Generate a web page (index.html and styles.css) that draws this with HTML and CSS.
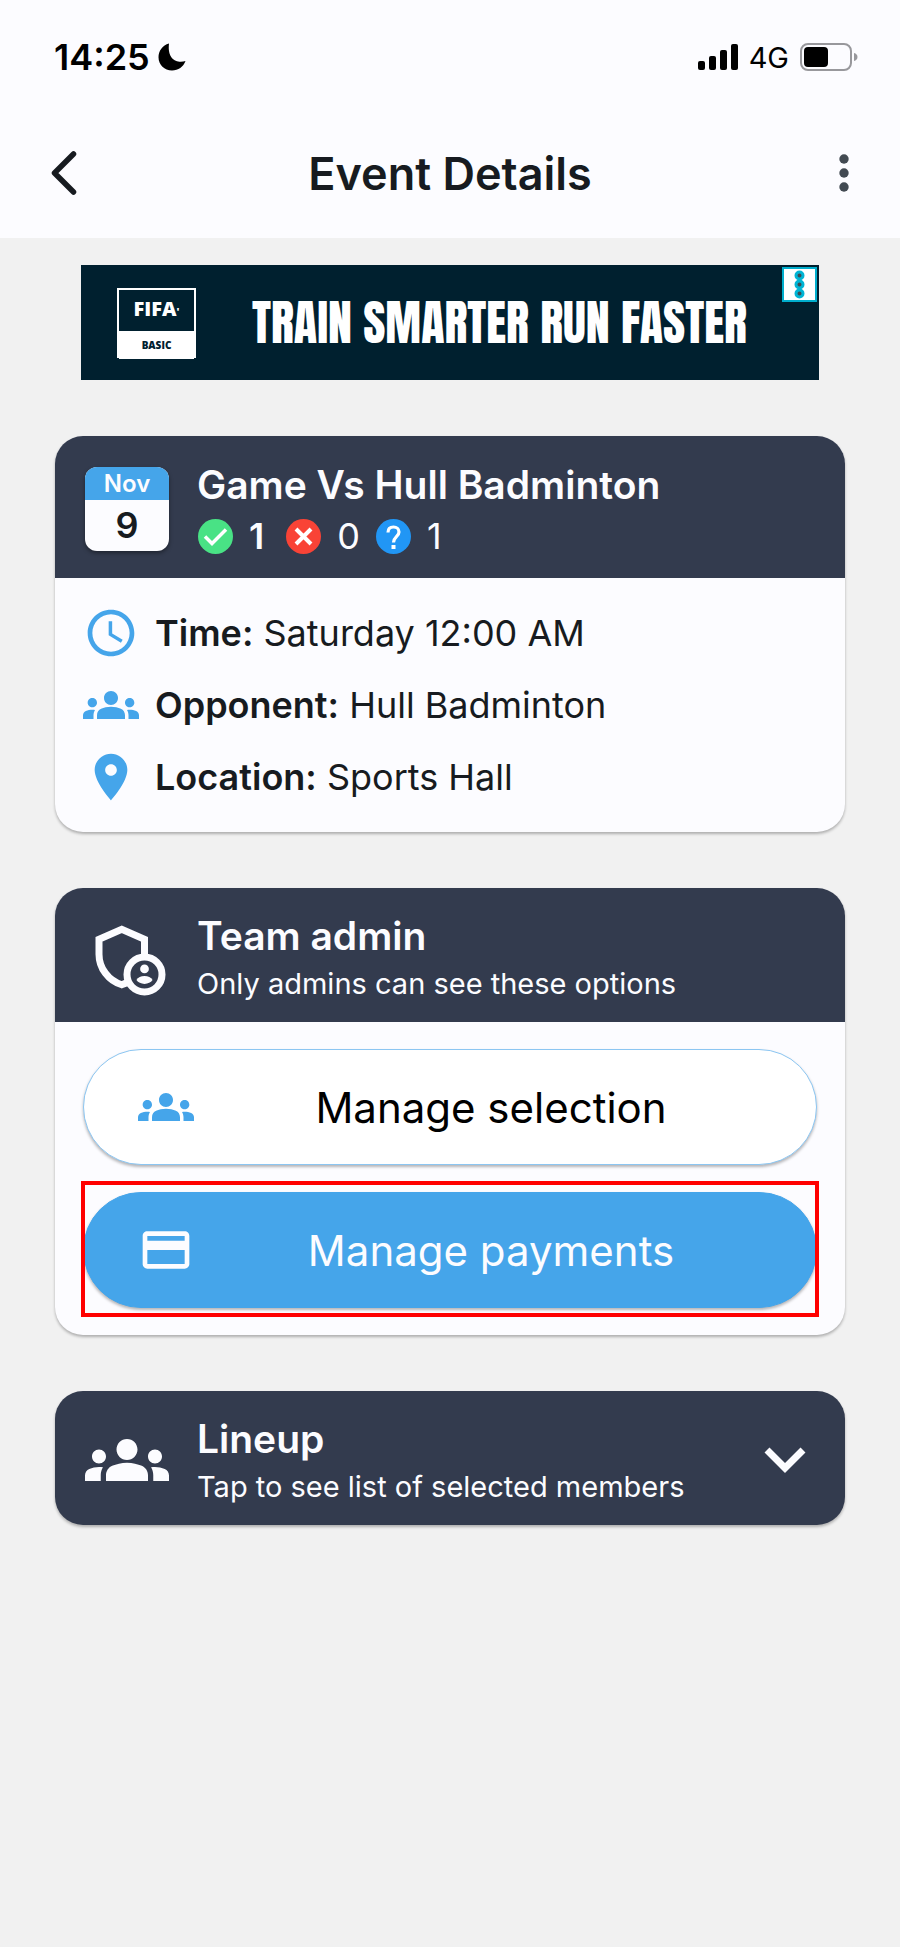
FILE: index.html
```html
<!DOCTYPE html>
<html lang="en">
<head>
    <meta charset="UTF-8">
    <meta name="viewport" content="width=device-width, initial-scale=1.0">
    <title>Event Details</title>
    <link rel="stylesheet" href="styles.css">
</head>
<body>
    <!-- shared icons -->
    <svg class="sprite" aria-hidden="true">
        <symbol id="icon-groups" viewBox="0 0 24 24">
            <path d="M12 12.75c1.63 0 3.07.39 4.24.9 1.08.48 1.76 1.56 1.76 2.73V18H6v-1.61c0-1.18.68-2.26 1.76-2.73 1.17-.52 2.61-.91 4.24-.91zM4 13c1.1 0 2-.9 2-2s-.9-2-2-2-2 .9-2 2 .9 2 2 2zm1.13 1.1c-.37-.06-.74-.1-1.13-.1-.99 0-1.93.21-2.78.58C.48 14.9 0 15.62 0 16.43V18h4.5v-1.61c0-.83.23-1.61.63-2.29zM20 13c1.1 0 2-.9 2-2s-.9-2-2-2-2 .9-2 2 .9 2 2 2zm4 3.43c0-.81-.48-1.53-1.22-1.85-.85-.37-1.79-.58-2.78-.58-.39 0-.76.04-1.13.1.4.68.63 1.46.63 2.29V18H24v-1.57zM12 6c1.66 0 3 1.34 3 3s-1.34 3-3 3-3-1.34-3-3 1.34-3 3-3z"/>
        </symbol>
    </svg>

    <header class="top">
        <div class="status-bar">
            <div class="status-left">
                <span class="clock">14:25</span>
                <svg class="moon" viewBox="0 0 28 28"><path d="M11 0.500C4.500 2.300.5 8 .5 14.200 .5 21.800 6.500 27.500 14 27.500c6.300 0 11.400-3.700 13.500-9.500C19.500 20.500 9 17 11 .5z"/></svg>
            </div>
            <div class="status-right">
                <svg class="signal" viewBox="0 0 40 26">
                    <rect x="0" y="17" width="7" height="9" rx="2"/>
                    <rect x="11" y="12" width="7" height="14" rx="2"/>
                    <rect x="22" y="6" width="7" height="20" rx="2"/>
                    <rect x="33" y="0" width="7" height="26" rx="2"/>
                </svg>
                <span class="network">4G</span>
                <svg class="battery" viewBox="0 0 58 28">
                    <rect x="1" y="1" width="50" height="26" rx="7" fill="none" stroke="#98989c" stroke-width="2"/>
                    <rect x="4" y="4" width="24" height="20" rx="4"/>
                    <path d="M54 10c2.200.5 3.500 2 3.500 4S56.200 17.500 54 18z" fill="#98989c"/>
                </svg>
            </div>
        </div>
        <nav class="app-bar">
            <button class="icon-button" type="button" aria-label="Back">
                <svg class="back" viewBox="0 0 26 44"><path d="M22.500 3 3.500 22l19 19" fill="none" stroke="currentColor" stroke-width="5.500" stroke-linecap="round" stroke-linejoin="round"/></svg>
            </button>
            <h1>Event Details</h1>
            <button class="icon-button more-button" type="button" aria-label="More options">
                <svg class="more" viewBox="0 0 10 38"><circle cx="5" cy="5" r="4.700"/><circle cx="5" cy="19" r="4.700"/><circle cx="5" cy="33" r="4.700"/></svg>
            </button>
        </nav>
    </header>

    <main class="content">
        <a class="banner" href="#">
            <span class="banner-logo">
                <span class="logo-top">FIFA<small>'</small></span>
                <span class="logo-bottom">BASIC</span>
            </span>
            <span class="banner-text">TRAIN SMARTER RUN FASTER</span>
            <svg class="ad-choices" viewBox="0 0 35 35">
                <rect x="1" y="1" width="33" height="33" fill="#fff" stroke="#00aecd" stroke-width="2"/>
                <g fill="#404b52" stroke="#00b4d4" stroke-width="3">
                    <circle cx="17.500" cy="8.500" r="3.500"/>
                    <circle cx="17.500" cy="17.500" r="3.500"/>
                    <circle cx="17.500" cy="26.500" r="3.500"/>
                </g>
            </svg>
        </a>

        <section class="card">
            <div class="card-header event-header">
                <div class="calendar">
                    <span class="month">Nov</span>
                    <span class="day">9</span>
                </div>
                <div class="card-heading">
                    <h2>Game Vs Hull Badminton</h2>
                    <div class="votes">
                        <svg class="vote" viewBox="0 0 35 35"><circle cx="17.500" cy="17.500" r="17.500" fill="#49e285"/><path d="M7 17.500l7 7L28 10.500" fill="none" stroke="#fff" stroke-width="3.500"/></svg>
                        <b>1</b>
                        <svg class="vote" viewBox="0 0 35 35"><circle cx="17.500" cy="17.500" r="17.500" fill="#f94336"/><path d="M10 10l15 15M25 10L10 25" fill="none" stroke="#fff" stroke-width="4"/></svg>
                        <span>0</span>
                        <svg class="vote" viewBox="0 0 35 35"><circle cx="17.500" cy="17.500" r="17.500" fill="#2196f5"/><path d="M12 13.500C12 9.500 14.500 8 17.500 8c3.200 0 5.500 2 5.500 5 0 4.500-5.500 5-5.500 10.500" fill="none" stroke="#fff" stroke-width="3.200"/><rect x="15.500" y="26" width="4" height="4" fill="#fff"/></svg>
                        <span>1</span>
                    </div>
                </div>
            </div>
            <ul class="details">
                <li>
                    <svg class="icon" viewBox="0 0 24 24"><path d="M11.990 2C6.470 2 2 6.480 2 12s4.470 10 9.990 10C17.520 22 22 17.520 22 12S17.520 2 11.990 2zM12 20c-4.420 0-8-3.580-8-8s3.580-8 8-8 8 3.580 8 8-3.580 8-8 8zm.5-13H11v6l5.250 3.150.75-1.230-4.500-2.670z"/></svg>
                    <p><b>Time:</b> Saturday 12:00 AM</p>
                </li>
                <li>
                    <svg class="icon"><use href="#icon-groups"/></svg>
                    <p><b>Opponent:</b> Hull Badminton</p>
                </li>
                <li>
                    <svg class="icon" viewBox="0 0 24 24"><path d="M12 2C8.130 2 5 5.130 5 9c0 5.250 7 13 7 13s7-7.750 7-13c0-3.870-3.130-7-7-7zm0 9.500c-1.380 0-2.500-1.120-2.500-2.500s1.120-2.500 2.500-2.500 2.500 1.120 2.500 2.500-1.120 2.500-2.500 2.500z"/></svg>
                    <p><b>Location:</b> Sports Hall</p>
                </li>
            </ul>
        </section>

        <section class="card">
            <div class="card-header">
                <svg class="header-icon" viewBox="0 0 24 24">
                    <g fill="none" stroke="currentColor" stroke-width="2">
                        <path d="M17 11.500V6.920L10.500 4.090 4 6.920v4.260c0 4 2.700 7.600 6.500 8.750.6-.2 1.100-.4 1.700-.75"/>
                        <circle cx="17" cy="17" r="5"/>
                    </g>
                    <circle cx="17" cy="15.400" r="1.250"/>
                    <path d="M14.700 18.600c.4-.8 1.300-1.200 2.300-1.200s1.900.4 2.300 1.200c-.5.700-1.300 1.100-2.300 1.100s-1.800-.4-2.300-1.100z"/>
                </svg>
                <div class="card-heading">
                    <h2>Team admin</h2>
                    <p>Only admins can see these options</p>
                </div>
            </div>
            <div class="actions">
                <button class="pill" type="button">
                    <svg class="icon"><use href="#icon-groups"/></svg>
                    <span>Manage selection</span>
                </button>
                <div class="highlight">
                    <button class="pill pill-primary" type="button">
                        <svg class="icon" viewBox="0 0 24 24"><path d="M20 4H4c-1.110 0-1.990.89-1.990 2L2 18c0 1.110.89 2 2 2h16c1.110 0 2-.89 2-2V6c0-1.110-.89-2-2-2zm0 14H4v-6h16v6zm0-10H4V6h16v2z"/></svg>
                        <span>Manage payments</span>
                    </button>
                </div>
            </div>
        </section>

        <button class="card card-header lineup" type="button" aria-expanded="false">
            <svg class="header-icon"><use href="#icon-groups"/></svg>
            <span class="card-heading">
                <span class="heading">Lineup</span>
                <span class="sub">Tap to see list of selected members</span>
            </span>
            <svg class="chevron" viewBox="0 0 42 26"><path d="M3 3l18 18L39 3" fill="none" stroke="currentColor" stroke-width="7"/></svg>
        </button>
    </main>
</body>
</html>
```
FILE: styles.css
```css
* {
    box-sizing: border-box;
}

body {
    margin: 0;
    font-family: Inter, "Liberation Sans", sans-serif;
    font-size: 36px;
    background-color: #f1f1f1;
    color: #171b20;
}

h1, h2, p, ul {
    margin: 0;
    padding: 0;
}

svg {
    display: block;
    flex: none;
    fill: currentColor;
}

button {
    font-family: inherit;
    border: none;
    cursor: pointer;
}

b {
    font-weight: 600;
}

.sprite {
    display: none;
}

/* status bar and title */
.top {
    background-color: #fcfcff;
}

.status-bar {
    display: flex;
    justify-content: space-between;
    align-items: center;
    height: 108px;
    padding: 6px 42px 0 54px;
    color: #000;
}

.status-left, .status-right {
    display: flex;
    align-items: center;
}

.status-left {
    gap: 8px;
}

.status-right {
    gap: 11px;
}

.clock {
    font-weight: 600;
}

.moon {
    width: 28px;
    height: 28px;
}

.signal {
    width: 40px;
    height: 26px;
}

.network {
    font-size: 29px;
}

.battery {
    width: 58px;
    height: 28px;
}

.app-bar {
    display: flex;
    justify-content: space-between;
    align-items: center;
    height: 130px;
    padding: 0 51px;
}

.app-bar h1 {
    font-size: 45px;
    font-weight: 600;
}

.icon-button {
    display: flex;
    width: 56px;
    padding: 0;
    background: none;
    color: #171b20;
}

.more-button {
    justify-content: flex-end;
    color: #424a52;
}

.back {
    width: 26px;
    height: 44px;
}

.more {
    width: 10px;
    height: 38px;
}

.content {
    display: flex;
    flex-direction: column;
    gap: 56px;
    padding: 27px 55px 56px;
}

/* advert */
.banner {
    position: relative;
    display: flex;
    align-items: center;
    gap: 56px;
    height: 115px;
    margin: 0 26px;
    padding: 0 36px;
    background-color: #00202f;
    color: #fff;
    text-decoration: none;
}

.banner-logo {
    display: flex;
    flex: none;
    flex-direction: column;
    width: 79px;
    height: 70px;
    border: 2px solid #fff;
    font-family: "Open Sans", sans-serif;
    font-weight: 800;
    text-align: center;
}

.logo-top {
    flex: 1;
    font-size: 20px;
    line-height: 38px;
}

.logo-top small {
    font-size: 10px;
}

.logo-bottom {
    background-color: #fff;
    color: #00202f;
    font-size: 10px;
    line-height: 28px;
}

.banner-text {
    font-family: Anton, "Roboto Condensed", Roboto, sans-serif;
    font-size: 48px;
    font-weight: 400;
    line-height: 72px;
    white-space: nowrap;
}

.ad-choices {
    position: absolute;
    top: 2px;
    right: 2px;
    width: 35px;
    height: 35px;
}

/* cards */
.card {
    border-radius: 28px;
    background-color: #fcfcff;
    box-shadow: 0 2px 3px rgba(0, 0, 0, 0.28);
    overflow: hidden;
}

.card-header {
    display: flex;
    align-items: center;
    gap: 28px;
    padding: 20px 30px 16px;
    background-color: #333b4e;
    color: #fcfcff;
}

.event-header {
    padding: 21px 30px 17px;
}

.card-heading {
    display: flex;
    flex-direction: column;
    flex: 1;
    padding-top: 2px;
}

.card-heading h2, .heading {
    font-size: 39px;
    font-weight: 600;
    line-height: 52px;
}

.card-heading p, .sub {
    font-size: 29px;
    line-height: 44px;
}

.header-icon {
    width: 84px;
    height: 84px;
}

.calendar {
    display: flex;
    flex-direction: column;
    width: 84px;
    height: 84px;
    border-radius: 12px;
    background-color: #fcfcff;
    box-shadow: 0 2px 4px rgba(0, 0, 0, 0.4);
    overflow: hidden;
    text-align: center;
}

.month {
    background-color: #45a5ea;
    font-size: 24px;
    font-weight: 600;
    line-height: 33px;
}

.day {
    color: #171b20;
    font-weight: 600;
    line-height: 51px;
}

.votes {
    display: flex;
    align-items: center;
    gap: 16px;
    padding-left: 1px;
    line-height: 50px;
}

.votes b {
    margin-right: 6px;
}

.vote {
    width: 35px;
    height: 35px;
}

.details {
    display: flex;
    flex-direction: column;
    gap: 16px;
    padding: 27px 28px;
    list-style: none;
}

.details li {
    display: flex;
    align-items: center;
    gap: 16px;
}

.icon {
    width: 56px;
    height: 56px;
    color: #45a5ea;
}

/* admin buttons */
.actions {
    display: flex;
    flex-direction: column;
    gap: 27px;
    padding: 27px 28px;
}

.pill {
    display: flex;
    align-items: center;
    width: 100%;
    height: 116px;
    padding: 0 28px 0 54px;
    border: 1px solid #8cc6f2;
    border-radius: 58px;
    background-color: #fff;
    box-shadow: 0 2px 3px rgba(0, 0, 0, 0.28);
    color: #000;
    font-size: 42px;
}

.pill span {
    flex: 1;
}

.pill-primary {
    border-color: #45a5ea;
    background-color: #45a5ea;
    color: #fcfcff;
}

.pill-primary .icon {
    color: #fcfcff;
}

/* red frame round the payments button */
.highlight {
    position: relative;
}

.highlight::after {
    content: "";
    position: absolute;
    inset: -11px -2px -9px;
    border: 4px solid #f00;
    pointer-events: none;
}

.lineup {
    width: 100%;
    text-align: left;
}

.chevron {
    width: 42px;
    height: 26px;
    margin-right: 9px;
}
```
